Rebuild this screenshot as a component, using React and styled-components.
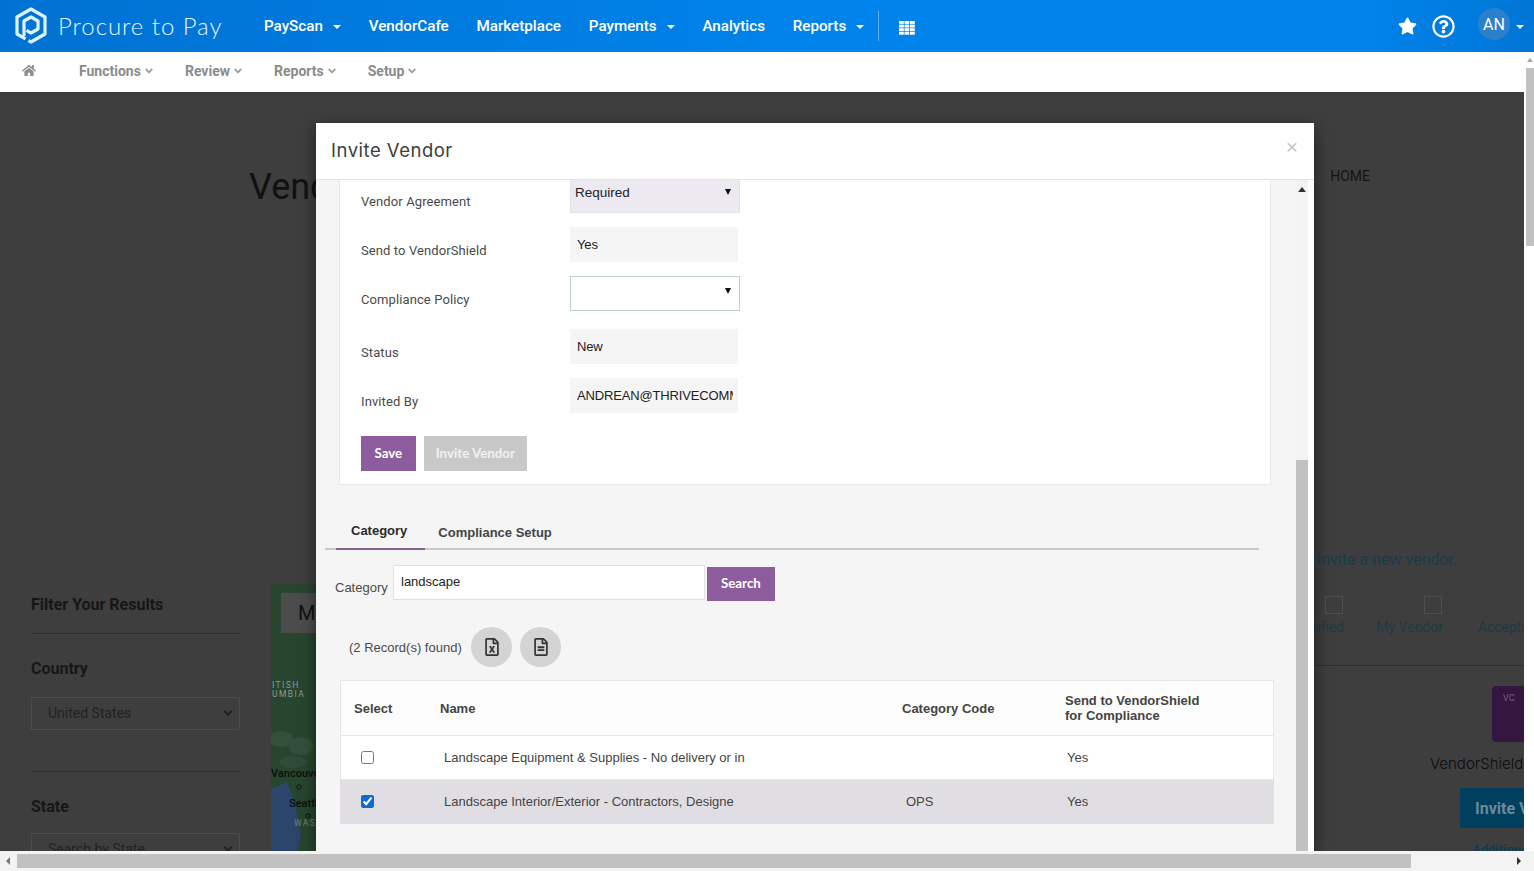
import React from 'react';
import styled, { createGlobalStyle } from 'styled-components';
import { FaStar, FaRegQuestionCircle, FaHome, FaAngleDown, FaRegFileExcel, FaRegFileAlt } from 'react-icons/fa';

const GlobalStyle = createGlobalStyle`
  html, body { margin: 0; padding: 0; height: 100%; overflow: hidden; }
  body { font-family: "Liberation Sans", Arial, sans-serif; font-size: 13px; color: #444; }
  * { box-sizing: border-box; }
`;

const Shell = styled.div`
  position: relative;
  width: 1534px;
  height: 871px;
  overflow: hidden;
  display: flex;
  flex-direction: column;
`;

const TopNav = styled.header`
  height: 52px;
  flex: none;
  display: flex;
  align-items: center;
  padding: 0 10px 0 15px;
  background: linear-gradient(90deg, #0072d2 0%, #0084ec 55%, #0084ec 88%, #0076d6 100%);
  color: #fff;
`;

const Logo = styled.div`
  display: flex;
  align-items: center;
  gap: 11px;
  width: 249px;
  padding-bottom: 1px;
  font-family: Lato, sans-serif;
  font-weight: 300;
  font-size: 24px;
  letter-spacing: 0.95px;
  color: #e6f5ff;
  white-space: nowrap;
`;

const MainLinks = styled.nav`
  display: flex;
  align-items: center;
  gap: 27.8px;
  font-family: Roboto, sans-serif;
  font-weight: 500;
  font-size: 15.2px;
`;

const NavLink = styled.span`
  display: flex;
  align-items: center;
  gap: 10px;
`;

const Caret = styled.i`
  display: inline-block;
  width: 0;
  height: 0;
  margin-top: 2px;
  border-left: 4px solid transparent;
  border-right: 4px solid transparent;
  border-top: 4px solid #fff;
`;

const NavDivider = styled.span`
  width: 1px;
  height: 30px;
  margin-left: -14px;
  background: rgba(255, 255, 255, 0.35);
`;

const GridButton = styled.svg`
  display: block;
  width: 16px;
  height: 14px;
  margin: 3px 0 0 -8px;
`;

const NavRight = styled.div`
  margin-left: auto;
  display: flex;
  align-items: center;
`;

const StarIcon = styled(FaStar)`
  width: 19px;
  height: 18px;
`;

const HelpIcon = styled(FaRegQuestionCircle)`
  width: 23px;
  height: 23px;
  margin-left: 15px;
`;

const Avatar = styled.span`
  width: 32px;
  height: 32px;
  margin: -4px 6px 0 23px;
  border-radius: 50%;
  background: #2b7fcb;
  display: flex;
  align-items: center;
  justify-content: center;
  font-family: Roboto, sans-serif;
  font-size: 16px;
`;

const Workspace = styled.div`
  flex: 1;
  min-height: 0;
  display: flex;
`;

const MainColumn = styled.div`
  flex: 1;
  min-width: 0;
  display: flex;
  flex-direction: column;
`;

const SubNav = styled.div`
  height: 40px;
  flex: none;
  display: flex;
  align-items: center;
  background: #fff;
  padding: 0 0 2px 22px;
  font-family: Roboto, sans-serif;
  font-weight: 700;
  font-size: 14px;
  color: #8b8b8b;
`;

const HomeIcon = styled(FaHome)`
  width: 14px;
  height: 13px;
  margin: -1px 43px 0 0;
  color: #8f8f8f;
`;

const SubLink = styled.span`
  display: flex;
  align-items: center;
  gap: 2px;
  margin-right: 30px;
  & > svg { width: 12px; height: 12px; color: #9d9d9d; }
`;

const Backdrop = styled.main`
  flex: 1;
  min-height: 0;
  overflow: hidden;
  background: #3e3e3e;
  color: #141414;
  font-family: Roboto, sans-serif;
`;

const HeadRow = styled.div`
  height: 456px;
  display: flex;
  justify-content: space-between;
  padding: 72px 154px 0 249px;
`;

const PageTitle = styled.h1`
  margin: 0;
  font-weight: 400;
  font-size: 36px;
  line-height: 46px;
  color: #111;
`;

const Crumb = styled.span`
  margin-top: 2px;
  font-size: 14px;
  line-height: 20px;
  color: #151515;
`;

const Lower = styled.div`
  display: flex;
  align-items: flex-start;
  overflow: hidden;
`;

const Sidebar = styled.aside`
  width: 209px;
  flex: none;
  margin-left: 31px;
  padding-top: 47px;
`;

const FilterTitle = styled.div`
  font-weight: 700;
  font-size: 16px;
  line-height: 20px;
  color: #161616;
`;

const FilterRule = styled.div`
  height: 1px;
  margin: ${(p) => p.$margin};
  background: #303030;
`;

const FakeSelect = styled.div`
  height: 33px;
  margin-top: ${(p) => p.$top};
  display: flex;
  align-items: center;
  justify-content: space-between;
  padding: 0 4px 2px 16px;
  border: 1px solid #4c4c4c;
  font-size: 14px;
  color: #222;
`;

const MapWrap = styled.div`
  position: relative;
  width: 1019px;
  height: 267px;
  flex: none;
  margin: 36px 0 0 31px;
  overflow: hidden;
  background: #27452f;
`;

const MapSvg = styled.svg`
  display: block;
  width: 100%;
  height: 100%;
  font-family: Roboto, sans-serif;
`;

const MapControl = styled.div`
  position: absolute;
  top: 9px;
  left: 10px;
  padding: 8px 17px 0;
  width: 100px;
  height: 40px;
  background: #4c4c4c;
  font-size: 20px;
  color: #111;
`;

const RightPanel = styled.div`
  width: 234px;
  flex: none;
  overflow: hidden;
  color: #1c2f38;
  white-space: nowrap;
`;

const InviteLine = styled.div`
  padding-left: 27px;
  font-size: 16px;
  line-height: 24px;
  color: #1c3b48;
`;

const ToggleRow = styled.div`
  display: flex;
  gap: 34px;
  margin-top: 24px;
`;

const Toggle = styled.div`
  display: flex;
  flex-direction: column;
  align-items: flex-end;
  width: ${(p) => p.$width}px;
  flex: none;
  font-size: 14px;
  line-height: 18px;
  color: #1f3a46;
`;

const ToggleBox = styled.span`
  width: 18px;
  height: 18px;
  margin: 0 1px 4px 0;
  border: 1px solid #4f4f4f;
`;

const PanelRule = styled.div`
  height: 1px;
  margin-top: 29px;
  background: #2f2f2f;
`;

const BadgeCard = styled.div`
  width: 60px;
  height: 56px;
  margin: 20px 0 0 202px;
  padding: 7px 0 0 11px;
  border-radius: 4px;
  background: #35163f;
  font-size: 9px;
  color: #7c5b87;
`;

const ShieldName = styled.div`
  margin: 11px 0 0 140px;
  font-family: Inter, sans-serif;
  font-weight: 300;
  font-size: 15px;
  line-height: 22px;
  color: #0c0c0c;
`;

const DimButton = styled.div`
  width: 100px;
  height: 40px;
  margin: 13px 0 0 170px;
  padding-left: 15px;
  background: #003f5e;
  font-weight: 700;
  font-size: 16px;
  line-height: 41px;
  color: #6c8a98;
`;

const AdditionalLine = styled.div`
  margin: 13px 0 0 182px;
  font-weight: 700;
  font-size: 13px;
  line-height: 18px;
  color: #0d3c55;
`;

const VScroll = styled.div`
  width: 10px;
  flex: none;
  display: flex;
  flex-direction: column;
  align-items: flex-end;
  padding-top: 6px;
  background: #fff;
`;

const ScrollUp = styled.i`
  width: 0;
  height: 0;
  margin-right: 1px;
  border-left: 3px solid transparent;
  border-right: 3px solid transparent;
  border-bottom: 4px solid #a3a3a3;
`;

const VThumb = styled.div`
  width: 8px;
  height: 178px;
  margin-top: 6px;
  background: #c1c1c1;
`;

const HScroll = styled.div`
  position: relative;
  z-index: 3;
  height: 20px;
  flex: none;
  display: flex;
  align-items: center;
  padding: 0 13px 1px 6px;
  background: #f3f3f3;
`;

const ArrowLeft = styled.i`
  border-top: 4px solid transparent;
  border-bottom: 4px solid transparent;
  border-right: 4px solid #777;
`;

const ArrowRight = styled.i`
  margin-left: auto;
  border-top: 4px solid transparent;
  border-bottom: 4px solid transparent;
  border-left: 4px solid #333;
`;

const HThumb = styled.div`
  width: 1394px;
  height: 14px;
  margin-left: 7px;
  background: #c1c1c1;
`;

const Modal = styled.section`
  position: absolute;
  z-index: 2;
  top: 123px;
  left: 316px;
  width: 998px;
  height: 728px;
  display: flex;
  flex-direction: column;
  background: #fff;
  box-shadow: 0 5px 15px rgba(0, 0, 0, 0.5);
`;

const ModalHeader = styled.div`
  height: 57px;
  flex: none;
  display: flex;
  justify-content: space-between;
  padding: 15px 16px 0 15px;
  border-bottom: 1px solid #e4e4e4;
`;

const ModalTitle = styled.h2`
  margin: 0;
  font-family: Inter, sans-serif;
  font-weight: 400;
  font-size: 18.5px;
  letter-spacing: 0.5px;
  line-height: 24px;
  color: #3d3d3d;
`;

const CloseMark = styled.span`
  font-size: 21px;
  line-height: 18px;
  color: #c4c4c4;
`;

const ModalBody = styled.div`
  flex: 1;
  min-height: 0;
  display: flex;
  padding-right: 6px;
`;

const Content = styled.div`
  width: 980px;
  flex: none;
  overflow: hidden;
  background: #f5f5f5;
`;

const ScrollTrack = styled.div`
  width: 12px;
  flex: none;
  display: flex;
  flex-direction: column;
  align-items: center;
  padding-top: 7px;
  background: #f3f3f3;
`;

const TrackUp = styled.i`
  border-left: 4px solid transparent;
  border-right: 4px solid transparent;
  border-bottom: 5px solid #333;
`;

const TrackThumb = styled.div`
  width: 12px;
  height: 391px;
  margin-top: auto;
  background: #c1c1c1;
`;

const FormCard = styled.div`
  width: 932px;
  height: 305px;
  margin-left: 23px;
  padding: 0 0 0 21px;
  background: #fff;
  border: 1px solid #e9e9e9;
  border-top: 0;
`;

const FormRow = styled.div`
  display: flex;
  height: ${(p) => p.$height}px;
  margin-bottom: ${(p) => p.$gap}px;
`;

const FieldLabel = styled.label`
  width: 209px;
  flex: none;
  padding-top: ${(p) => p.$top}px;
  font-family: Roboto, "Liberation Sans", sans-serif;
  font-size: 13px;
  letter-spacing: 0.1px;
  line-height: 16px;
  color: #4a4a4a;
`;

const ReadOnlyInput = styled.input`
  width: 168px;
  height: 35px;
  padding: 0 5px 0 7px;
  border: 0;
  outline: 0;
  background: #f5f5f5;
  font-family: "Liberation Sans", Arial, sans-serif;
  font-size: 13px;
  letter-spacing: -0.15px;
  color: #222;
`;

const SelectBox = styled.div`
  position: relative;
  width: 170px;
  height: 100%;
  padding: ${(p) => p.$pad};
  font-size: 13.5px;
  line-height: 16px;
  color: #222;
  background: ${(p) => (p.$filled ? '#ede9f0' : '#fff')};
  border: 1px solid ${(p) => (p.$filled ? '#e3e0e6' : '#b9d2cf')};
  border-top-width: ${(p) => (p.$filled ? 0 : 1)}px;
`;

const SelectArrow = styled.i`
  position: absolute;
  right: 8px;
  top: ${(p) => p.$top}px;
  border-left: 3.5px solid transparent;
  border-right: 3.5px solid transparent;
  border-top: 6px solid #111;
`;

const ButtonRow = styled.div`
  display: flex;
  gap: 8px;
  margin-top: 23px;
`;

const ActionButton = styled.button`
  height: ${(p) => p.$height || 35}px;
  padding: 0 ${(p) => p.$pad || 12}px 2px;
  border: 0;
  background: ${(p) => (p.disabled ? '#c8c8c8' : '#8c5c9c')};
  color: ${(p) => (p.disabled ? '#f1f1f1' : '#fff')};
  font-family: Lato, sans-serif;
  font-weight: 700;
  font-size: 13.3px;
`;

const TabBar = styled.div`
  display: flex;
  width: 934px;
  height: 34px;
  margin: 31px 0 0 9px;
  border-bottom: 2px solid #c9c9c9;
`;

const Tab = styled.div`
  position: relative;
  height: 34px;
  margin-left: ${(p) => (p.$active ? '11px' : '0')};
  padding: ${(p) => (p.$active ? '6px 18px 0 15px' : '8px 0 0 13px')};
  font-family: "Liberation Sans", Arial, sans-serif;
  font-weight: 700;
  font-size: 13px;
  line-height: 18px;
  color: ${(p) => (p.$active ? '#2b2b2b' : '#444')};
  border-bottom: ${(p) => (p.$active ? '2px solid #85618f' : '0')};
`;

const SearchRow = styled.div`
  display: flex;
  align-items: flex-start;
  margin: 15px 0 0 19px;
`;

const SearchLabel = styled.label`
  width: 58px;
  flex: none;
  padding-top: 15px;
  font-size: 13px;
  line-height: 16px;
  color: #4a4a4a;
`;

const SearchInput = styled.input`
  width: 312px;
  height: 35px;
  padding: 0 7px 2px;
  border: 1px solid #e2dde6;
  outline: 0;
  background: #fff;
  font-family: "Liberation Sans", Arial, sans-serif;
  font-size: 13px;
  color: #222;
`;

const SearchSlot = styled.div`
  margin: 2px 0 0 2px;
`;

const RecordRow = styled.div`
  display: flex;
  align-items: center;
  height: 40px;
  margin: 26px 0 0 33px;
  font-size: 13px;
  color: #4a4a4a;
`;

const RecordCount = styled.span`
  width: 122px;
  flex: none;
`;

const RoundIcon = styled.span`
  width: 41px;
  height: 40px;
  margin-right: 8px;
  display: flex;
  align-items: center;
  justify-content: center;
  border-radius: 50%;
  background: #d4d4d4;
  color: #333;
  font-size: 18px;
`;

const Table = styled.div`
  width: 934px;
  margin: 13px 0 0 24px;
  background: #fff;
`;

const TableRow = styled.div`
  display: grid;
  grid-template-columns: 86px 462px 163px 1fr;
  align-items: center;
  height: ${(p) => p.$height}px;
  background: ${(p) => p.$bg};
  border: 1px solid ${(p) => p.$line};
  border-width: 0 1px 1px 1px;
  &:first-child { border-top-width: 1px; }
`;

const HeadCell = styled.div`
  padding-left: 13px;
  font-weight: 700;
  font-size: 13px;
  line-height: 15px;
  color: #444;
`;

const BodyCell = styled.div`
  padding: 0 0 1px ${(p) => p.$left}px;
  font-size: 13px;
  color: #444;
  white-space: nowrap;
  overflow: hidden;
`;

const RowCheck = styled.input`
  display: block;
  width: 13px;
  height: 13px;
  margin: 0 0 0 20px;
  accent-color: #0f6bd2;
`;

function LogoMark() {
  return (
    <svg width="32" height="37" viewBox="0 0 32 37" fill="none" stroke="#dff3ff" strokeWidth="3.2" strokeLinejoin="round">
      <path d="M10.5 31.8 L2 27 V10 L16 2 L30 10 V27 L16 35 L13.5 33.6" />
      <path d="M9 29 V14 L16 10 L23 14 V22 L16 26 L11.5 23.4" />
    </svg>
  );
}

function GridMark() {
  const cells = [];
  for (let row = 0; row < 4; row += 1) {
    for (let col = 0; col < 3; col += 1) {
      cells.push(<rect key={`${row}-${col}`} x={col * 5.5} y={row * 3.6} width="4.8" height="2.9" />);
    }
  }
  return <GridButton viewBox="0 0 16 14" fill="#fff">{cells}</GridButton>;
}

function MapArt() {
  return (
    <MapSvg viewBox="0 0 1019 267" preserveAspectRatio="none">
      <rect width="1019" height="267" fill="#27452f" />
      <path d="M0 205 L16 198 L24 220 L30 250 L26 267 H0 Z" fill="#2c466b" />
      <ellipse cx="10" cy="155" rx="12" ry="8" fill="#34503c" />
      <ellipse cx="30" cy="162" rx="12" ry="9" fill="#34503c" />
      <ellipse cx="22" cy="178" rx="14" ry="6" fill="#304b38" />
      <text x="1" y="104" fontSize="8.5" letterSpacing="1.4" fill="#8e9b90">ITISH</text>
      <text x="1" y="113" fontSize="8.5" letterSpacing="1.4" fill="#8e9b90">UMBIA</text>
      <text x="0" y="193" fontSize="11" fontWeight="500" fill="#0d0d0d">Vancouver</text>
      <circle cx="28" cy="203" r="2.2" fill="none" stroke="#111" />
      <text x="18" y="223" fontSize="11" fontWeight="500" fill="#0d0d0d">Seattle</text>
      <circle cx="37" cy="232" r="2.2" fill="none" stroke="#111" />
      <text x="23" y="242" fontSize="8.5" letterSpacing="1.4" fill="#74827a">WASHINGTON</text>
    </MapSvg>
  );
}

const mainLinks = [
  { label: 'PayScan', menu: true },
  { label: 'VendorCafe' },
  { label: 'Marketplace' },
  { label: 'Payments', menu: true },
  { label: 'Analytics' },
  { label: 'Reports', menu: true },
];

const subLinks = ['Functions', 'Review', 'Reports', 'Setup'];

const App = () => {
  return (
    <Shell>
      <GlobalStyle />
      <TopNav>
        <Logo>
          <LogoMark />
          Procure to Pay
        </Logo>
        <MainLinks>
          {mainLinks.map((link) => (
            <NavLink key={link.label}>
              {link.label}
              {link.menu && <Caret />}
            </NavLink>
          ))}
          <NavDivider />
          <GridMark />
        </MainLinks>
        <NavRight>
          <StarIcon />
          <HelpIcon />
          <Avatar>AN</Avatar>
          <Caret />
        </NavRight>
      </TopNav>

      <Workspace>
        <MainColumn>
          <SubNav>
            <HomeIcon />
            {subLinks.map((link) => (
              <SubLink key={link}>
                {link}
                <FaAngleDown />
              </SubLink>
            ))}
          </SubNav>
          <Backdrop>
            <HeadRow>
              <PageTitle>Vendor Search</PageTitle>
              <Crumb>HOME</Crumb>
            </HeadRow>
            <Lower>
              <Sidebar>
                <FilterTitle>Filter Your Results</FilterTitle>
                <FilterRule $margin="18px 0 25px" />
                <FilterTitle>Country</FilterTitle>
                <FakeSelect $top="18px">
                  United States
                  <FaAngleDown />
                </FakeSelect>
                <FilterRule $margin="41px 0 25px" />
                <FilterTitle>State</FilterTitle>
                <FakeSelect $top="16px">
                  Search by State
                  <FaAngleDown />
                </FakeSelect>
              </Sidebar>
              <MapWrap>
                <MapArt />
                <MapControl>Map</MapControl>
              </MapWrap>
              <RightPanel>
                <InviteLine>Invite a new vendor.</InviteLine>
                <ToggleRow>
                  <Toggle $width={54}>
                    <ToggleBox />
                    Verified
                  </Toggle>
                  <Toggle $width={65}>
                    <ToggleBox />
                    My Vendor
                  </Toggle>
                  <Toggle $width={110}>
                    <ToggleBox />
                    Accepts Payment
                  </Toggle>
                </ToggleRow>
                <PanelRule />
                <BadgeCard>VC</BadgeCard>
                <ShieldName>VendorShield</ShieldName>
                <DimButton>Invite Vendor</DimButton>
                <AdditionalLine>Additional</AdditionalLine>
              </RightPanel>
            </Lower>
          </Backdrop>
        </MainColumn>
        <VScroll>
          <ScrollUp />
          <VThumb />
        </VScroll>
      </Workspace>

      <HScroll>
        <ArrowLeft />
        <HThumb />
        <ArrowRight />
      </HScroll>

      <Modal>
        <ModalHeader>
          <ModalTitle>Invite Vendor</ModalTitle>
          <CloseMark>×</CloseMark>
        </ModalHeader>
        <ModalBody>
          <Content>
            <FormCard>
              <FormRow $height={33} $gap={14}>
                <FieldLabel $top={14}>Vendor Agreement</FieldLabel>
                <SelectBox $filled $pad="5px 0 0 4px">
                  Required
                  <SelectArrow $top={9} />
                </SelectBox>
              </FormRow>
              <FormRow $height={35} $gap={14}>
                <FieldLabel $top={16}>Send to VendorShield</FieldLabel>
                <ReadOnlyInput readOnly value="Yes" />
              </FormRow>
              <FormRow $height={35} $gap={18}>
                <FieldLabel $top={16}>Compliance Policy</FieldLabel>
                <SelectBox $pad="0">
                  <SelectArrow $top={11} />
                </SelectBox>
              </FormRow>
              <FormRow $height={35} $gap={14}>
                <FieldLabel $top={16}>Status</FieldLabel>
                <ReadOnlyInput readOnly value="New" />
              </FormRow>
              <FormRow $height={35} $gap={0}>
                <FieldLabel $top={16}>Invited By</FieldLabel>
                <ReadOnlyInput readOnly value="ANDREAN@THRIVECOMMUNITY.COM" />
              </FormRow>
              <ButtonRow>
                <ActionButton $pad={13.5}>Save</ActionButton>
                <ActionButton disabled>Invite Vendor</ActionButton>
              </ButtonRow>
            </FormCard>

            <TabBar>
              <Tab $active>Category</Tab>
              <Tab>Compliance Setup</Tab>
            </TabBar>

            <SearchRow>
              <SearchLabel>Category</SearchLabel>
              <SearchInput readOnly value="landscape" />
              <SearchSlot>
                <ActionButton $height={34} $pad={14}>Search</ActionButton>
              </SearchSlot>
            </SearchRow>

            <RecordRow>
              <RecordCount>(2 Record(s) found)</RecordCount>
              <RoundIcon><FaRegFileExcel /></RoundIcon>
              <RoundIcon><FaRegFileAlt /></RoundIcon>
            </RecordRow>

            <Table>
              <TableRow $height={56} $bg="#fcfcfc" $line="#e6e6e6">
                <HeadCell>Select</HeadCell>
                <HeadCell>Name</HeadCell>
                <HeadCell>Category Code</HeadCell>
                <HeadCell>Send to VendorShield<br />for Compliance</HeadCell>
              </TableRow>
              <TableRow $height={44} $bg="#fff" $line="#e6e6e6">
                <RowCheck type="checkbox" readOnly checked={false} />
                <BodyCell $left={17}>Landscape Equipment &amp; Supplies - No delivery or in</BodyCell>
                <BodyCell $left={17} />
                <BodyCell $left={15}>Yes</BodyCell>
              </TableRow>
              <TableRow $height={44} $bg="#e0dee3" $line="#e0dee3">
                <RowCheck type="checkbox" readOnly checked />
                <BodyCell $left={17}>Landscape Interior/Exterior - Contractors, Designe</BodyCell>
                <BodyCell $left={17}>OPS</BodyCell>
                <BodyCell $left={15}>Yes</BodyCell>
              </TableRow>
            </Table>
          </Content>
          <ScrollTrack>
            <TrackUp />
            <TrackThumb />
          </ScrollTrack>
        </ModalBody>
      </Modal>
    </Shell>
  );
};

export default App;
